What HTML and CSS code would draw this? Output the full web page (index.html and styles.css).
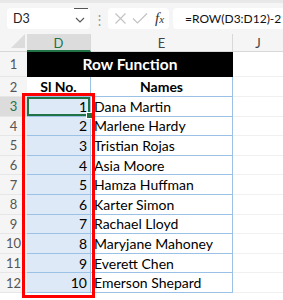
FILE: index.html
```html
<!DOCTYPE html>
<html lang="en">
<head>
  <meta charset="UTF-8">
  <title>Row Function</title>
  <link rel="stylesheet" href="styles.css">
</head>
<body>
  <div class="topstrip"></div>
  <div class="formulabar">
    <div class="namebox">
      <span>D3</span>
      <svg class="chevron" width="10" height="6" viewBox="0 0 10 6"><path d="M1 1 L5 5 L9 1" fill="none" stroke="#555" stroke-width="1.1"/></svg>
    </div>
    <div class="dots">&#8942;</div>
    <div class="fxbox">
      <svg width="13" height="13" viewBox="0 0 13 13"><path d="M1.5 1.5 L11.5 11.5 M11.5 1.5 L1.5 11.5" stroke="#c2c2c2" stroke-width="1.1"/></svg>
      <svg width="16" height="13" viewBox="0 0 16 13"><path d="M1 6.5 L5.5 11 L15 1.5" fill="none" stroke="#c2c2c2" stroke-width="1.1"/></svg>
      <span class="fx"><i>f</i><i class="x">x</i></span>
    </div>
    <div class="formula">=ROW(D3:D12)-2</div>
  </div>

  <div class="sheet">
    <div class="corner"><svg width="14" height="14" viewBox="0 0 14 14"><path d="M14 0 L14 14 L0 14 Z" fill="#dcdcdc"/></svg></div>
    <div class="colhead sel">D</div>
    <div class="colhead">E</div>
    <div class="colhead last">J</div>

    <div class="rowhead r1">1</div>
    <div class="title">Row Function</div>
    <div class="blank r1"></div>

    <div class="rowhead">2</div>
    <div class="cell th">Sl No.</div>
    <div class="cell th name">Names</div>
    <div class="blank"></div>

    <div class="rowhead sel">3</div>
    <div class="cell num active">1</div>
    <div class="cell name">Dana Martin</div>
    <div class="blank"></div>

    <div class="rowhead">4</div>
    <div class="cell num">2</div>
    <div class="cell name">Marlene Hardy</div>
    <div class="blank"></div>

    <div class="rowhead">5</div>
    <div class="cell num">3</div>
    <div class="cell name">Tristian Rojas</div>
    <div class="blank"></div>

    <div class="rowhead">6</div>
    <div class="cell num">4</div>
    <div class="cell name">Asia Moore</div>
    <div class="blank"></div>

    <div class="rowhead">7</div>
    <div class="cell num">5</div>
    <div class="cell name">Hamza Huffman</div>
    <div class="blank"></div>

    <div class="rowhead">8</div>
    <div class="cell num">6</div>
    <div class="cell name">Karter Simon</div>
    <div class="blank"></div>

    <div class="rowhead">9</div>
    <div class="cell num">7</div>
    <div class="cell name">Rachael Lloyd</div>
    <div class="blank"></div>

    <div class="rowhead">10</div>
    <div class="cell num">8</div>
    <div class="cell name">Maryjane Mahoney</div>
    <div class="blank"></div>

    <div class="rowhead">11</div>
    <div class="cell num">9</div>
    <div class="cell name">Everett Chen</div>
    <div class="blank"></div>

    <div class="rowhead">12</div>
    <div class="cell num">10</div>
    <div class="cell name">Emerson Shepard</div>
    <div class="blank"></div>

    <!-- red highlight round D3:D12 -->
    <div class="highlight"></div>
  </div>
</body>
</html>
```

FILE: styles.css
```css
body {
  margin: 0;
  width: 283px;
  height: 300px;
  overflow: hidden;
  background: #fff;
  font-family: Lato, "Liberation Sans", sans-serif;
  color: #000;
}
.topstrip {
  height: 3px;
  background: #e8e8e8;
}
.formulabar {
  display: flex;
  align-items: center;
  height: 31px;
  background: #f5f5f5;
  padding-left: 7px;
  box-sizing: border-box;
}
.namebox {
  width: 83px;
  height: 21px;
  background: #fff;
  border-radius: 4px;
  display: flex;
  align-items: center;
  justify-content: space-between;
  padding: 0 5px 0 6px;
  box-sizing: border-box;
  font-size: 12.5px;
  color: #222;
  position: relative;
}
.namebox::before {
  content: "";
  position: absolute;
  top: 0;
  right: 2px;
  width: 14px;
  height: 1px;
  background: #555;
}
.chevron {
  margin-top: 2px;
}
.dots {
  width: 18px;
  text-align: center;
  color: #9a9a9a;
  font-size: 13px;
}
.fxbox {
  width: 61px;
  height: 21px;
  background: #fff;
  border-radius: 4px;
  display: flex;
  align-items: center;
  gap: 5px;
  padding-left: 6px;
  box-sizing: border-box;
}
.fx {
  font-family: "Liberation Serif", serif;
  font-size: 15px;
  color: #333;
  margin-left: 2px;
}
.fx .x {
  font-size: 11px;
}
.formula {
  flex: 1;
  height: 21px;
  margin-left: 4px;
  background: #fff;
  border-radius: 4px 0 0 4px;
  font-size: 12px;
  line-height: 21px;
  padding-left: 12px;
  color: #111;
  white-space: nowrap;
}
.sheet {
  position: relative;
  display: grid;
  grid-template-columns: 27px 64px 142px 50px;
  grid-template-rows: 18px 25px 20px repeat(10, 19.6px);
  background: #fff;
}
.corner {
  background: #f5f5f5;
  display: flex;
  align-items: flex-end;
  justify-content: flex-end;
  padding: 0 2px 3px 0;
  border-bottom: 1px solid #d8d8d8;
}
.colhead {
  background: #f5f5f5;
  border-right: 1px solid #d8d8d8;
  border-bottom: 1px solid #d8d8d8;
  text-align: center;
  font-size: 13px;
  line-height: 18px;
  color: #444;
  box-sizing: border-box;
}
.colhead.sel {
  background: #dcdcdc;
  color: #217346;
  border-bottom: 2px solid #217346;
}
.colhead.last {
  border-right: none;
}
.rowhead {
  background: #f5f5f5;
  border-bottom: 1px solid #e6e6e6;
  color: #555;
  font-size: 13px;
  text-align: center;
  display: flex;
  align-items: center;
  justify-content: center;
  box-sizing: border-box;
}
.rowhead.sel {
  background: #dcdcdc;
  color: #217346;
}
.title {
  grid-column: 2 / 4;
  background: #000;
  color: #fff;
  font-weight: bold;
  font-size: 15.5px;
  text-align: center;
  line-height: 25px;
}
.blank {
  border-bottom: 1px solid #f0f0f0;
}
.cell {
  font-size: 14px;
  display: flex;
  align-items: center;
  box-sizing: border-box;
  border-bottom: 1.5px solid #9bc2e6;
  border-right: 1.5px solid #9bc2e6;
  padding: 0 3px;
}
.cell.th {
  font-weight: bold;
  justify-content: center;
}
.cell.num {
  background: #dde9f6;
  justify-content: flex-end;
}
.cell.name {
  justify-content: flex-start;
}
.cell.th.name {
  justify-content: center;
}
.cell.active {
  position: relative;
  box-shadow: inset 0 0 0 2px #217346;
}
.cell.active::after {
  content: "";
  position: absolute;
  right: -3px;
  bottom: -3px;
  width: 5px;
  height: 5px;
  background: #217346;
  border: 1px solid #fff;
}
.highlight {
  position: absolute;
  left: 22px;
  top: 59px;
  width: 73px;
  height: 205px;
  border: 3px solid #ff0000;
  box-sizing: border-box;
  pointer-events: none;
}
```
